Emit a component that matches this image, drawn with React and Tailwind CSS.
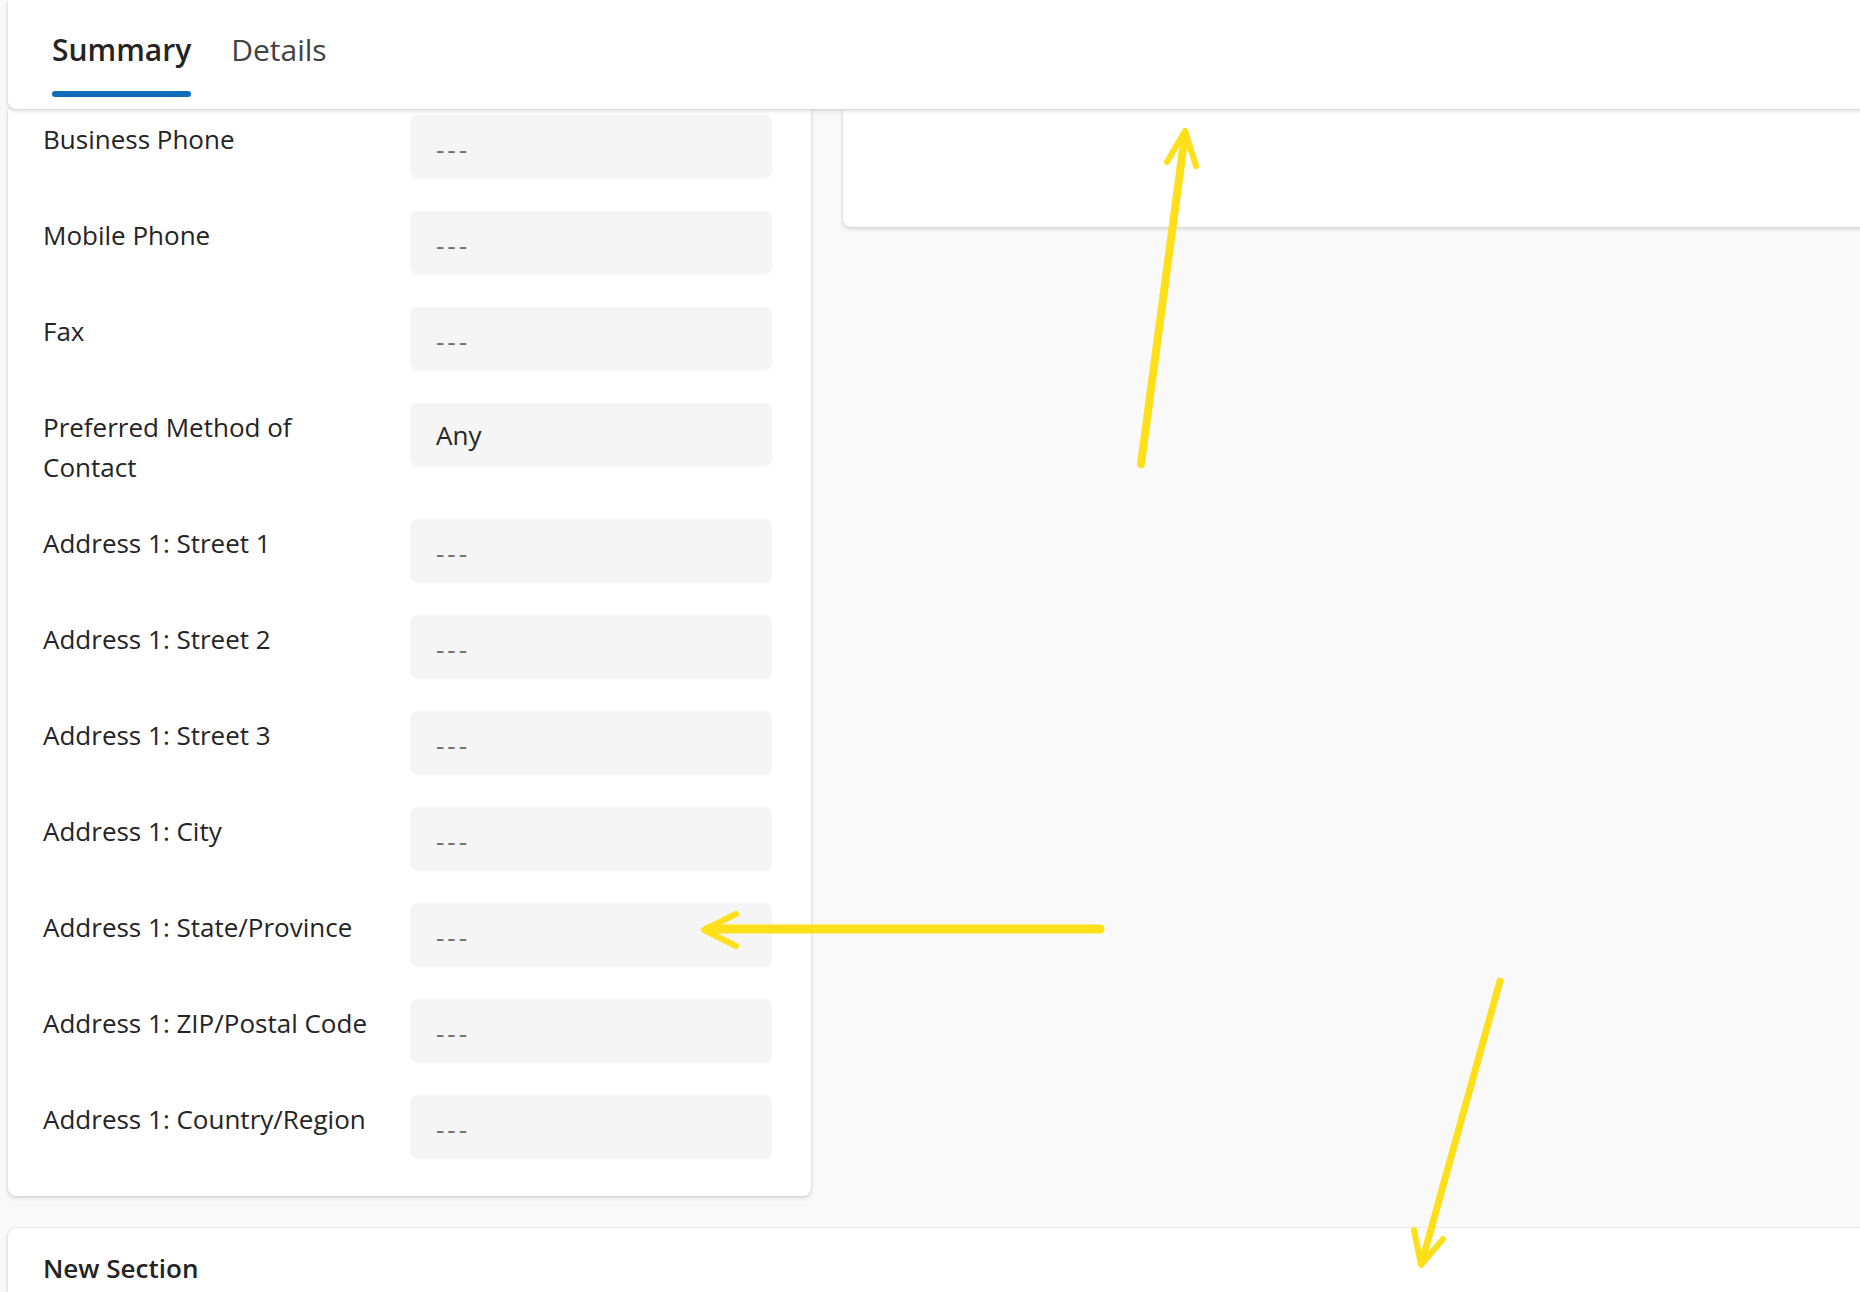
import React from "react"

const fields = [
  { label: "Business Phone", value: "---" },
  { label: "Mobile Phone", value: "---" },
  { label: "Fax", value: "---" },
  { label: "Preferred Method of\nContact", value: "Any" },
  { label: "Address 1: Street 1", value: "---" },
  { label: "Address 1: Street 2", value: "---" },
  { label: "Address 1: Street 3", value: "---" },
  { label: "Address 1: City", value: "---" },
  { label: "Address 1: State/Province", value: "---" },
  { label: "Address 1: ZIP/Postal Code", value: "---" },
  { label: "Address 1: Country/Region", value: "---" }
]

const Tab = ({ label, active }) => (
  <div className="flex flex-col pt-[30px]">
    <span
      className={
        active
          ? "text-[30px] leading-[40px] font-semibold text-[#242424]"
          : "text-[30px] leading-[40px] text-[#424242]"
      }
    >
      {label}
    </span>
    <div
      className={
        active
          ? "mt-[21px] h-[6px] rounded-full bg-[#0f6cbd]"
          : "mt-[21px] h-[6px]"
      }
    />
  </div>
)

const FieldRow = ({ label, value }) => (
  <div className="flex items-start">
    <div className="w-[367px] shrink-0 pt-[4px] pr-[16px] text-[26px] leading-[40px] whitespace-pre-line text-[#242424]">
      {label}
    </div>
    <div className="flex h-16 w-[362px] items-center rounded-lg bg-[#f5f5f5] px-[26px] text-[26px]">
      {value === "---" ? (
        <span className="pt-[4px] tracking-[3px] text-[#707070]">---</span>
      ) : (
        <span className="text-[#242424]">{value}</span>
      )}
    </div>
  </div>
)

const Arrows = () => (
  <svg
    className="pointer-events-none absolute inset-0 z-20 h-full w-full"
    viewBox="0 0 1860 1292"
    fill="none"
    stroke="#fde01a"
    strokeLinecap="round"
    strokeLinejoin="round"
  >
    <path d="M1141 464 L1185 134" strokeWidth="8" />
    <path d="M1167 162 L1185 131 L1196 166" strokeWidth="6" />
    <path d="M1100 929 L708 929" strokeWidth="9" />
    <path d="M736 914 L704 930 L736 946" strokeWidth="6" />
    <path d="M1500 981 L1423 1258" strokeWidth="7" />
    <path d="M1414 1230 L1421 1265 L1443 1239" strokeWidth="6" />
  </svg>
)

export default function App() {
  return (
    <div className="relative h-[1292px] overflow-hidden bg-[#f9f9f9] font-['Segoe_UI','Open_Sans',sans-serif] text-[#242424]">
      {/* sticky tab header */}
      <div className="relative z-10 ml-2 -mr-2 flex h-[109px] gap-10 rounded-b-lg bg-white pl-[44px] shadow-[0_0_2px_rgba(0,0,0,0.12),0_2px_4px_rgba(0,0,0,0.14)]">
        <Tab label="Summary" active />
        <Tab label="Details" />
      </div>

      <div className="-mr-2 grid grid-cols-[803px_1fr] items-start gap-x-8 pl-2">
        <div className="rounded-b-lg bg-white pt-[6px] pb-[37px] pl-[35px] pr-[39px] shadow-[0_0_2px_rgba(0,0,0,0.12),0_2px_4px_rgba(0,0,0,0.14)]">
          <div className="flex flex-col gap-8">
            {fields.map((f) => (
              <FieldRow key={f.label} label={f.label} value={f.value} />
            ))}
          </div>
        </div>
        <div className="h-[118px] rounded-b-lg bg-white shadow-[0_0_2px_rgba(0,0,0,0.12),0_2px_4px_rgba(0,0,0,0.14)]" />
      </div>

      <div className="mt-8 ml-2 -mr-2 h-[120px] rounded-t-lg bg-white pt-[20px] pl-[35px] shadow-[0_0_2px_rgba(0,0,0,0.12),0_2px_4px_rgba(0,0,0,0.14)]">
        <h2 className="text-[26px] font-semibold leading-[40px] text-[#242424]">
          New Section
        </h2>
      </div>

      <Arrows />
    </div>
  )
}
